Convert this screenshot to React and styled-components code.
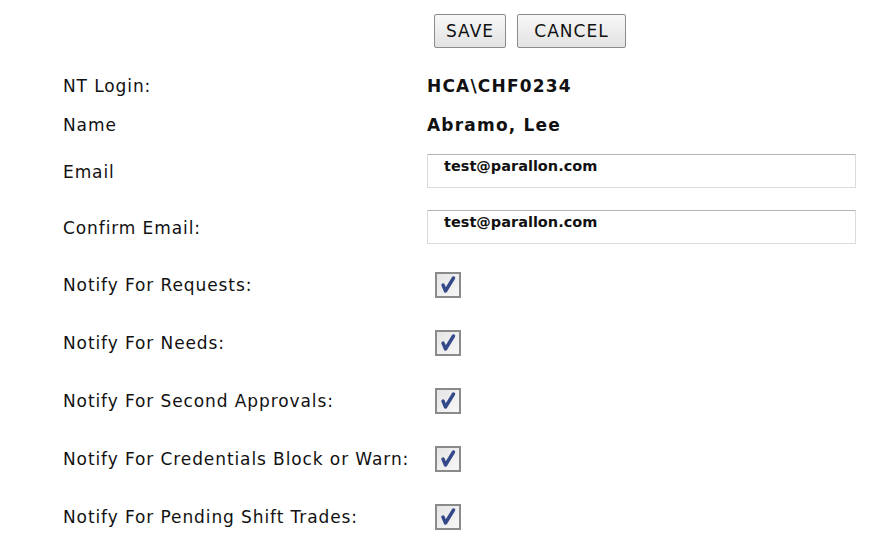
import React from "react";
import styled, { createGlobalStyle } from "styled-components";

const GlobalStyle = createGlobalStyle`
  html, body {
    margin: 0;
    background: #fff;
  }
  body {
    font-family: "DejaVu Sans", Verdana, sans-serif;
    color: #111;
  }
`;

const notifications = [
  "Notify For Requests:",
  "Notify For Needs:",
  "Notify For Second Approvals:",
  "Notify For Credentials Block or Warn:",
  "Notify For Pending Shift Trades:",
];

function CheckMark() {
  return (
    <svg width="26" height="26" viewBox="0 0 26 26">
      <defs>
        <linearGradient id="cbfill" x1="0" y1="0" x2="1" y2="1">
          <stop offset="0" stopColor="#e4e4e4" />
          <stop offset="1" stopColor="#f8f8f8" />
        </linearGradient>
      </defs>
      <rect x="1" y="1" width="24" height="24" fill="url(#cbfill)" stroke="#8a8a8a" strokeWidth="2" />
      <path
        d="M8 13 L10.5 19 L18.5 6"
        fill="none"
        stroke="#34498a"
        strokeWidth="3.4"
        strokeLinecap="round"
        strokeLinejoin="round"
      />
    </svg>
  );
}

export default function App() {
  return (
    <>
      <GlobalStyle />
      <Page>
        <Toolbar>
          <Button type="button" $w={72}>SAVE</Button>
          <Button type="button" $w={109}>CANCEL</Button>
        </Toolbar>
        <Form>
          <Label>NT Login:</Label>
          <Value>HCA\CHF0234</Value>

          <Label>Name</Label>
          <Value>Abramo, Lee</Value>

          <Label $tall>Email</Label>
          <InputCell>
            <TextInput defaultValue="test@parallon.com" />
          </InputCell>

          <Label $tall>Confirm Email:</Label>
          <InputCell>
            <TextInput defaultValue="test@parallon.com" />
          </InputCell>

          {notifications.map((text) => (
            <React.Fragment key={text}>
              <Label $check>{text}</Label>
              <CheckCell>
                <CheckMark />
              </CheckCell>
            </React.Fragment>
          ))}
        </Form>
      </Page>
    </>
  );
}

const Page = styled.div`
  padding: 14px 15px 0 63px;
`;

const Toolbar = styled.div`
  display: flex;
  gap: 11px;
  margin-left: 371px;
  margin-bottom: 18px;
`;

const Button = styled.button`
  width: ${(p) => p.$w}px;
  height: 34px;
  padding: 0 8px;
  font-family: "DejaVu Sans", Verdana, sans-serif;
  font-size: 17px;
  letter-spacing: 1px;
  color: #111;
  border: 1px solid #8c8c8c;
  border-radius: 2px;
  background: linear-gradient(#f8f8f8, #e2e2e2);
`;

const Form = styled.div`
  display: grid;
  grid-template-columns: 364px 1fr;
  align-items: center;
`;

const Label = styled.div`
  font-size: 17px;
  letter-spacing: 0.9px;
  height: ${(p) => (p.$check ? "58px" : p.$tall ? "56px" : "39px")};
  display: flex;
  align-items: center;
`;

const Value = styled.div`
  font-size: 17px;
  font-weight: bold;
  letter-spacing: 1.2px;
  height: 39px;
  display: flex;
  align-items: center;
`;

const InputCell = styled.div`
  height: 56px;
  display: flex;
  align-items: center;
`;

const TextInput = styled.input`
  box-sizing: border-box;
  width: 429px;
  height: 34px;
  margin-top: -3px;
  padding: 0 16px 10px;
  border: 1px solid #dcdcdc;
  border-top-color: #b4b4b4;
  font-family: "DejaVu Sans", Verdana, sans-serif;
  font-size: 14.5px;
  font-weight: bold;
  color: #111;
  outline: none;
`;

const CheckCell = styled.div`
  height: 58px;
  display: flex;
  align-items: center;
  padding-left: 8px;
`;
